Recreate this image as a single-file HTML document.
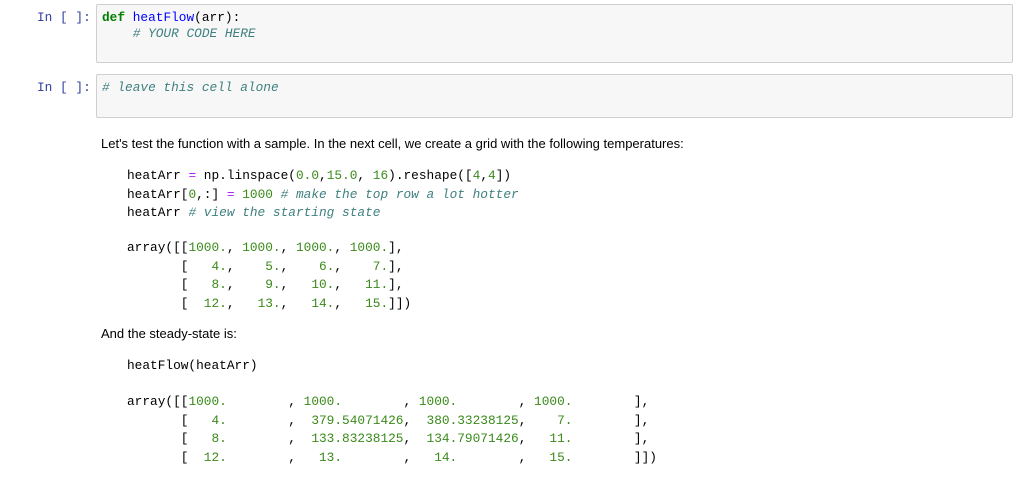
<!DOCTYPE html>
<html><head><meta charset="utf-8"><style>
body{margin:0;width:1024px;height:495px;background:#fff;position:relative;overflow:hidden;font-family:"Liberation Sans",sans-serif;}
pre{margin:0;font-family:"Liberation Mono",monospace;font-size:12.8px;position:absolute;color:#000;}
.p{color:#303f9f;left:37px;}
.cell{position:absolute;left:96px;width:917px;background:#f7f7f7;border:1px solid #cfcfcf;border-radius:2px;box-sizing:border-box;}
.k{color:#008000;font-weight:bold}.f{color:#0000ff}.c{color:#408080;font-style:italic}.n{color:#3a8a1a}.o{color:#aa22ff}
.t{position:absolute;left:101px;font-size:13px;color:#000;}
</style></head><body>
<pre class="p" style="top:10px;line-height:16px">In [ ]:</pre>
<div class="cell" style="top:4px;height:59px"></div>
<pre style="left:102px;top:10px;line-height:15.5px"><span class="k">def</span> <span class="f">heatFlow</span>(arr):
    <span class="c"># YOUR CODE HERE</span></pre>
<pre class="p" style="top:80px;line-height:16px">In [ ]:</pre>
<div class="cell" style="top:74px;height:44px"></div>
<pre style="left:102px;top:80px;line-height:16px"><span class="c"># leave this cell alone</span></pre>
<div class="t" style="top:136px">Let's test the function with a sample. In the next cell, we create a grid with the following temperatures:</div>
<pre style="left:127px;top:167px;line-height:18.5px">heatArr <span class="o">=</span> np.linspace(<span class="n">0.0</span>,<span class="n">15.0</span>, <span class="n">16</span>).reshape([<span class="n">4</span>,<span class="n">4</span>])
heatArr[<span class="n">0</span>,:] <span class="o">=</span> <span class="n">1000</span> <span class="c"># make the top row a lot hotter</span>
heatArr <span class="c"># view the starting state</span></pre>
<pre style="left:127px;top:239px;line-height:18.7px">array([[<span class="n">1000.</span>, <span class="n">1000.</span>, <span class="n">1000.</span>, <span class="n">1000.</span>],
       [   <span class="n">4.</span>,    <span class="n">5.</span>,    <span class="n">6.</span>,    <span class="n">7.</span>],
       [   <span class="n">8.</span>,    <span class="n">9.</span>,   <span class="n">10.</span>,   <span class="n">11.</span>],
       [  <span class="n">12.</span>,   <span class="n">13.</span>,   <span class="n">14.</span>,   <span class="n">15.</span>]])</pre>
<div class="t" style="top:326px">And the steady-state is:</div>
<pre style="left:127px;top:357px;line-height:18px">heatFlow(heatArr)</pre>
<pre style="left:127px;top:393px;line-height:18.5px">array([[<span class="n">1000.</span>        , <span class="n">1000.</span>        , <span class="n">1000.</span>        , <span class="n">1000.</span>        ],
       [   <span class="n">4.</span>        ,  <span class="n">379.54071426</span>,  <span class="n">380.33238125</span>,    <span class="n">7.</span>        ],
       [   <span class="n">8.</span>        ,  <span class="n">133.83238125</span>,  <span class="n">134.79071426</span>,   <span class="n">11.</span>        ],
       [  <span class="n">12.</span>        ,   <span class="n">13.</span>        ,   <span class="n">14.</span>        ,   <span class="n">15.</span>        ]])</pre>
</body></html>
